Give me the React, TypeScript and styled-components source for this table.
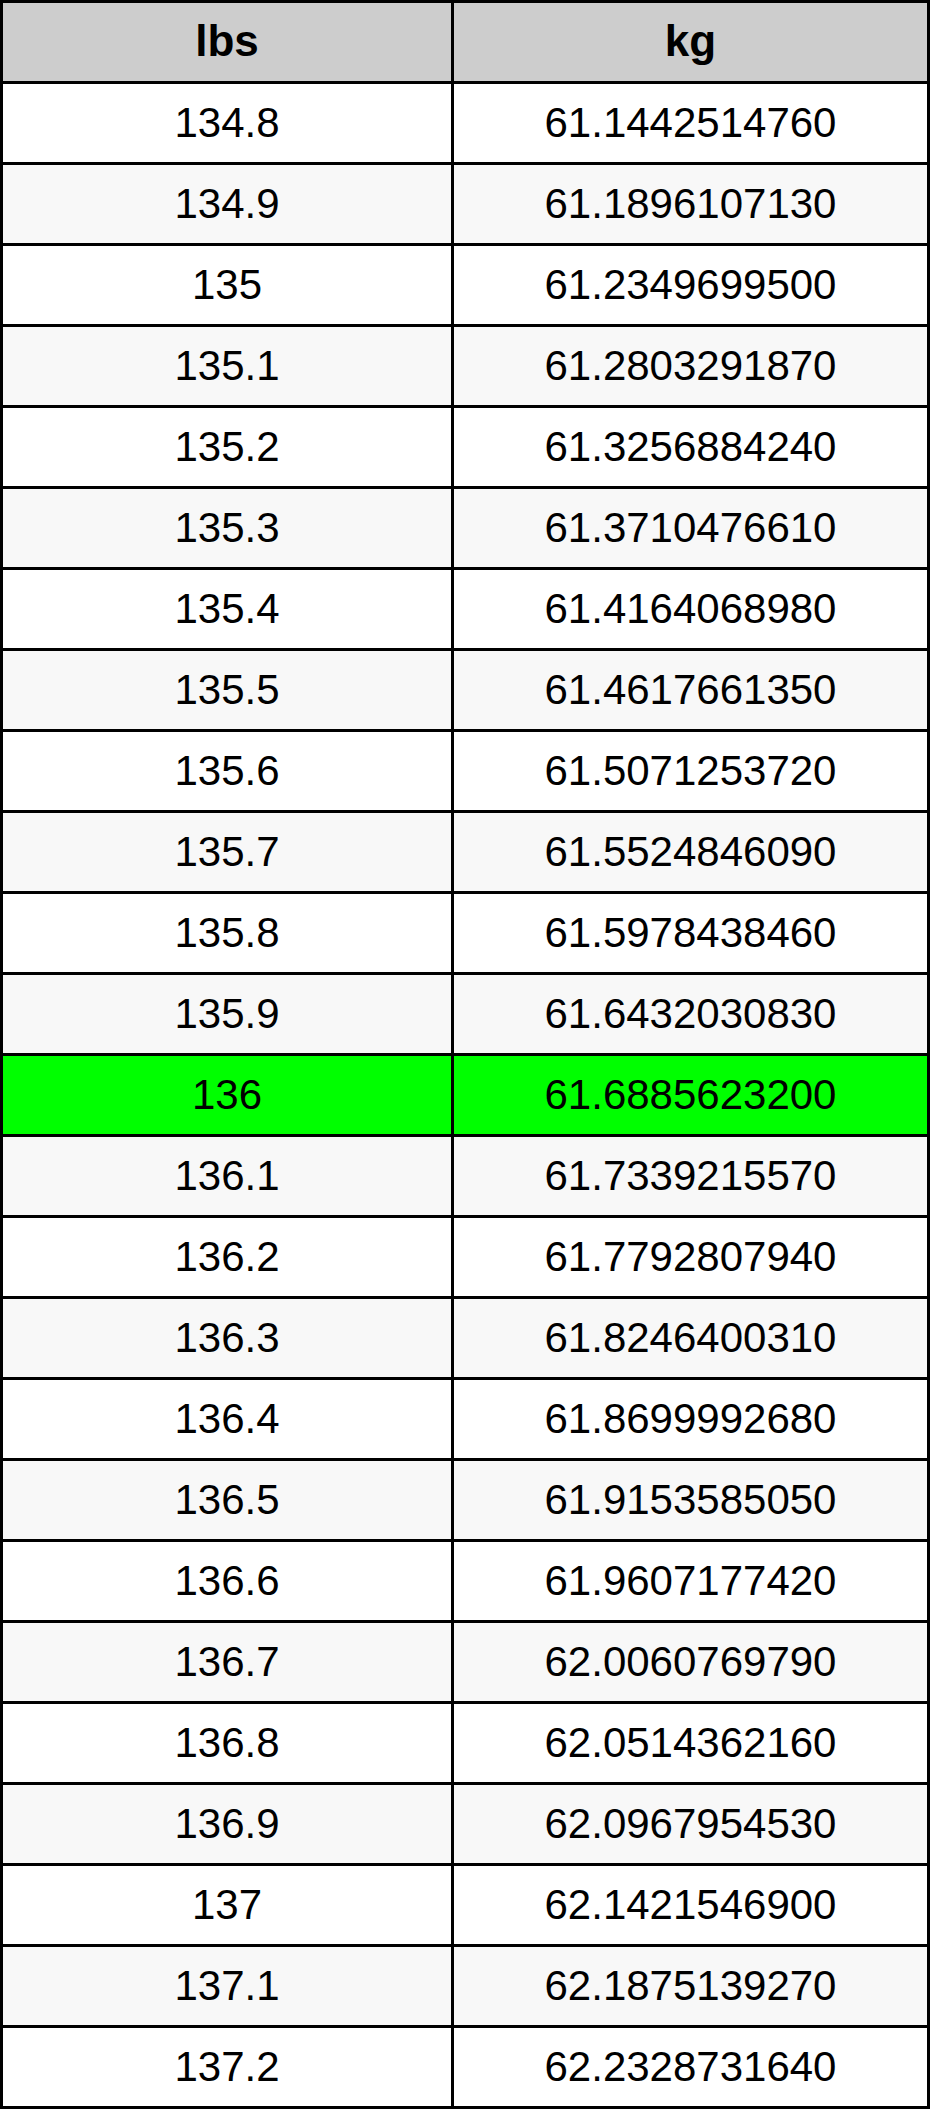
import styled, { createGlobalStyle } from "styled-components";

const GlobalStyle = createGlobalStyle`
  html, body {
    margin: 0;
    padding: 0;
    background: #fff;
  }
  body {
    font-family: "Liberation Sans", Arial, sans-serif;
    color: #000;
  }
`;

const rows: [string, string][] = [
  ["134.8", "61.1442514760"],
  ["134.9", "61.1896107130"],
  ["135", "61.2349699500"],
  ["135.1", "61.2803291870"],
  ["135.2", "61.3256884240"],
  ["135.3", "61.3710476610"],
  ["135.4", "61.4164068980"],
  ["135.5", "61.4617661350"],
  ["135.6", "61.5071253720"],
  ["135.7", "61.5524846090"],
  ["135.8", "61.5978438460"],
  ["135.9", "61.6432030830"],
  ["136", "61.6885623200"],
  ["136.1", "61.7339215570"],
  ["136.2", "61.7792807940"],
  ["136.3", "61.8246400310"],
  ["136.4", "61.8699992680"],
  ["136.5", "61.9153585050"],
  ["136.6", "61.9607177420"],
  ["136.7", "62.0060769790"],
  ["136.8", "62.0514362160"],
  ["136.9", "62.0967954530"],
  ["137", "62.1421546900"],
  ["137.1", "62.1875139270"],
  ["137.2", "62.2328731640"],
];

const HIGHLIGHT = "136";

const Table = styled.div`
  display: grid;
  grid-template-columns: 448px 473px;
  grid-auto-rows: 78px;
  gap: 3px;
  padding: 3px;
  width: 930px;
  box-sizing: border-box;
  background: #000;
`;

const HeadCell = styled.div`
  display: flex;
  align-items: center;
  justify-content: center;
  background: #cdcdcd;
  font-size: 44px;
  font-weight: bold;
  padding-bottom: 2px;
  box-sizing: border-box;
`;

const Cell = styled.div<{ $bg: string }>`
  display: flex;
  align-items: center;
  justify-content: center;
  background: ${(p) => p.$bg};
  font-size: 42px;
  padding-bottom: 1px;
  box-sizing: border-box;
`;

export default function App() {
  return (
    <>
      <GlobalStyle />
      <Table>
        <HeadCell>lbs</HeadCell>
        <HeadCell>kg</HeadCell>
        {rows.map(([lbs, kg], i) => {
          const bg = lbs === HIGHLIGHT ? "#00ff00" : i % 2 === 0 ? "#ffffff" : "#f8f8f8";
          return [
            <Cell key={lbs + "-l"} $bg={bg}>{lbs}</Cell>,
            <Cell key={lbs + "-k"} $bg={bg}>{kg}</Cell>,
          ];
        })}
      </Table>
    </>
  );
}
